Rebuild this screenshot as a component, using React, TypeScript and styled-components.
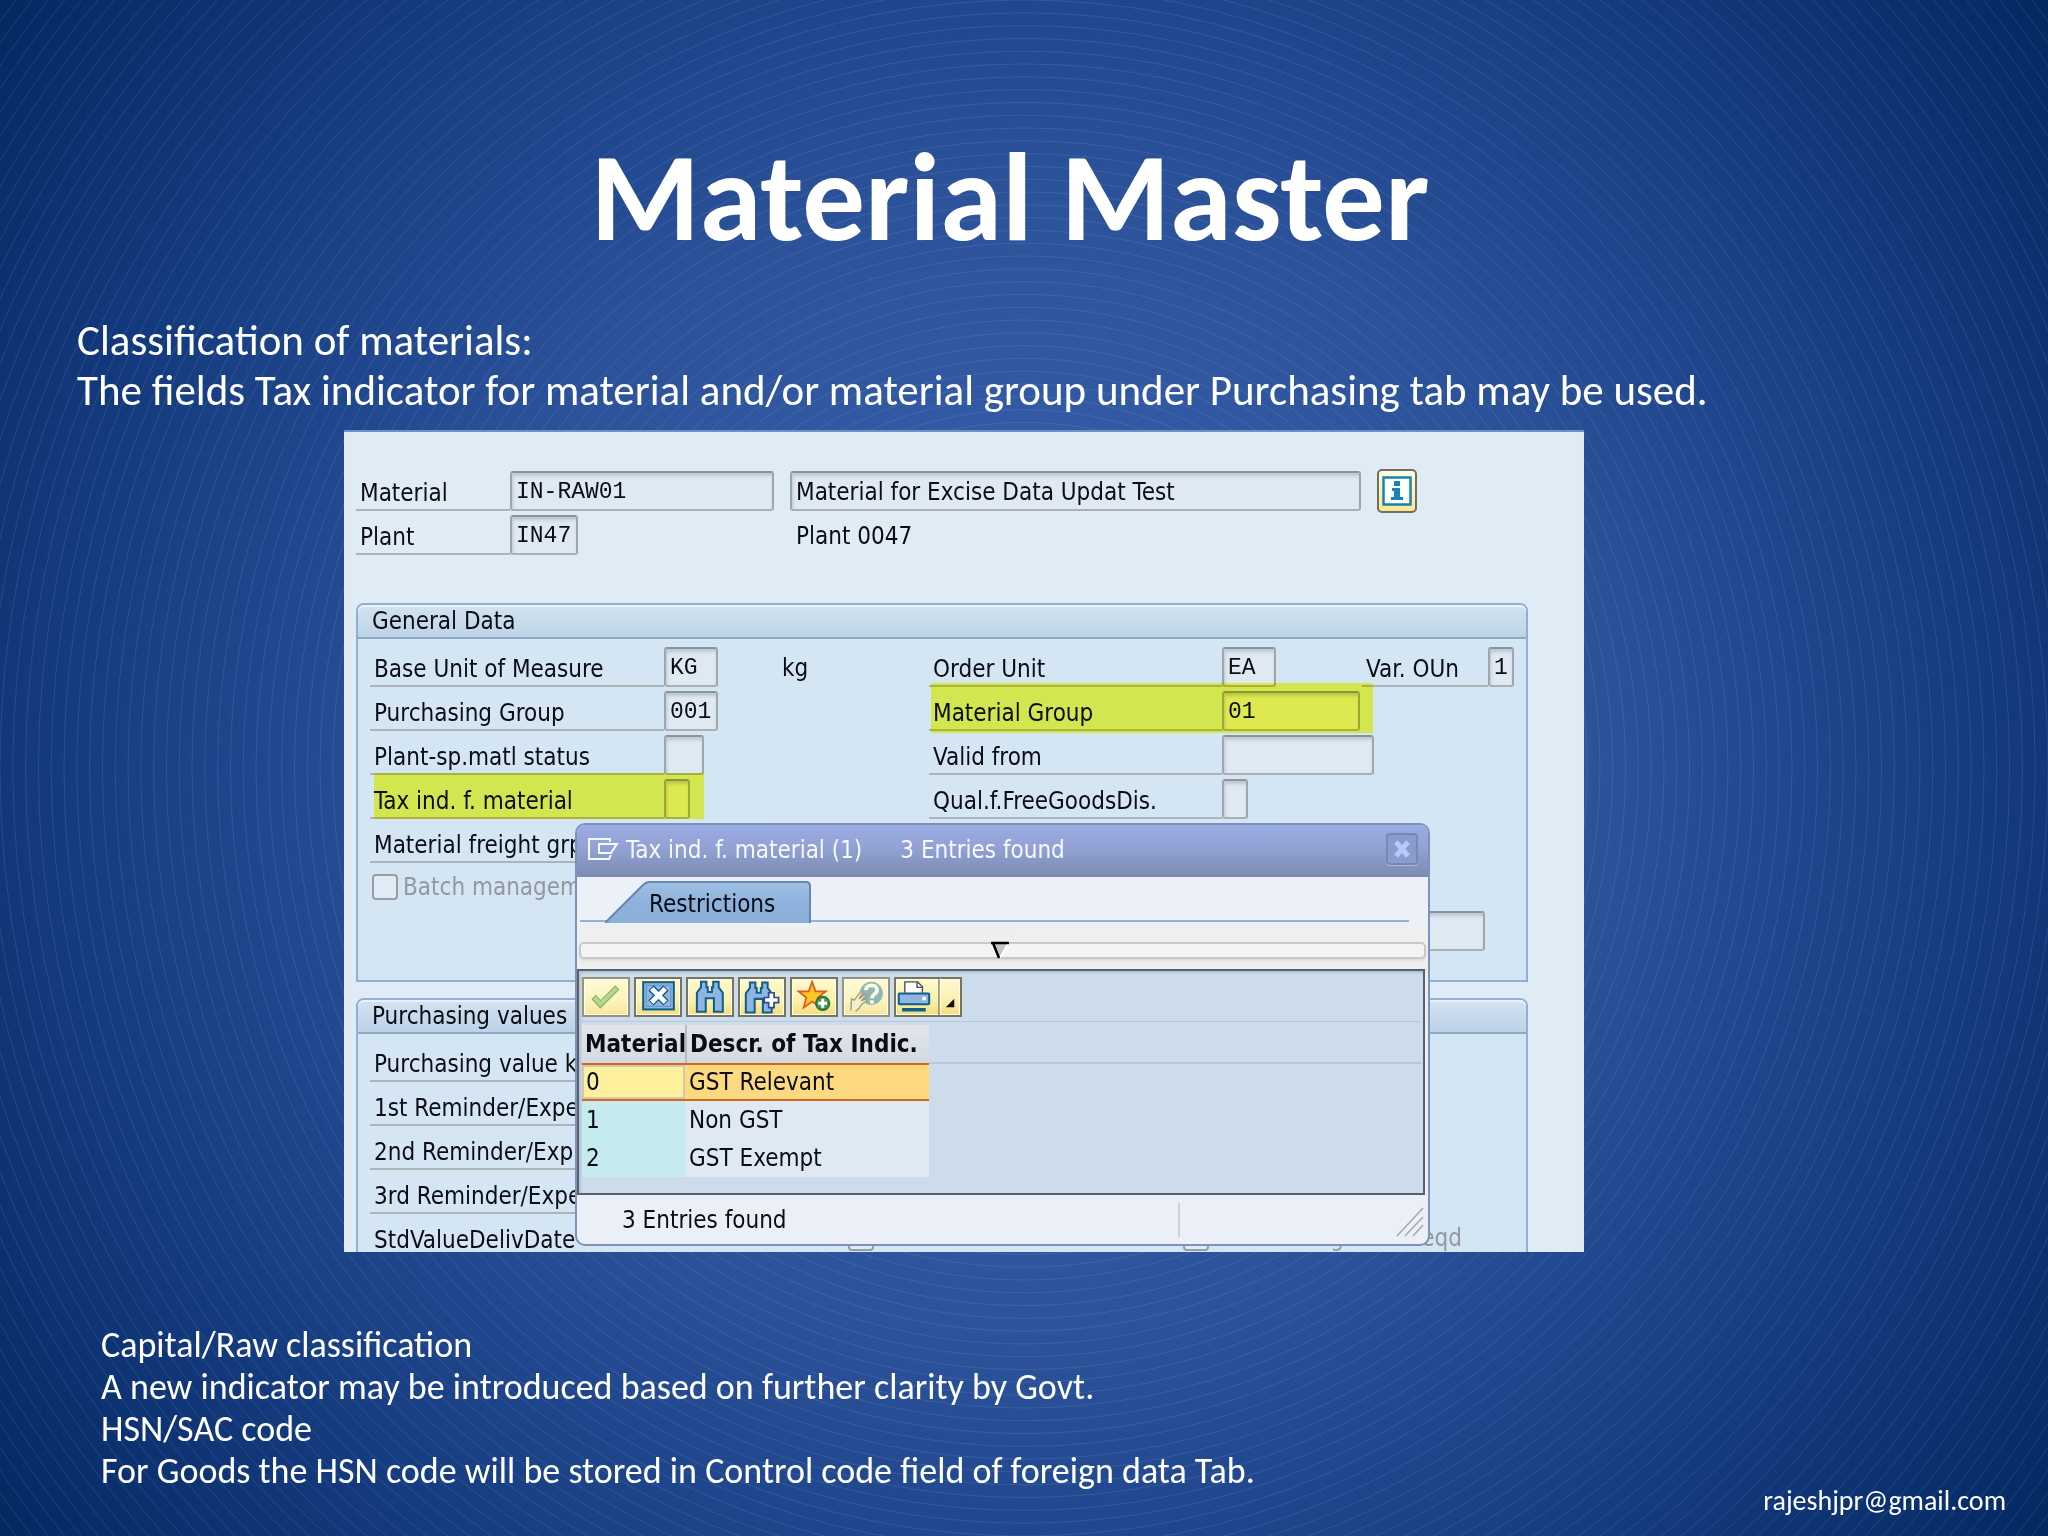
import React from 'react';
import styled, { createGlobalStyle, css } from 'styled-components';

const GlobalStyle = createGlobalStyle`
  *, *::before, *::after { box-sizing: border-box; }
  body { margin: 0; background: #0a2f6e; }
  button, input { font: inherit; color: inherit; margin: 0; }
`;

const slideFont = `Carlito, Lato, "Open Sans", sans-serif`;
const formFont = `"DejaVu Sans Condensed", "DejaVu Sans", "Noto Sans", sans-serif`;
const monoFont = `"Liberation Mono", "DejaVu Sans Mono", monospace`;

/* ---------- Slide ---------- */

const Slide = styled.main`
  position: relative;
  display: flex;
  flex-direction: column;
  min-height: 100vh;
  padding: 122px 0 18px;
  overflow: hidden;
  color: #fff;
  font-family: ${slideFont};
  background: radial-gradient(
    circle farthest-corner at 50% 50%,
    #3a60ae 0%,
    #335aa5 25%,
    #2c5299 45%,
    #20478d 60%,
    #12387b 79%,
    #032861 100%
  );
`;

const Backdrop = styled.svg`
  position: absolute;
  inset: 0;
  width: 100%;
  height: 100%;
`;

const Title = styled.h1`
  position: relative;
  margin: 0 28px 0 0;
  font-size: 125px;
  line-height: 152px;
  font-weight: 700;
  text-align: center;
`;

const Intro = styled.p`
  position: relative;
  margin: 42px 77px 14px;
  font-size: 43px;
  line-height: 50px;
`;

const Footer = styled.footer`
  position: relative;
  display: flex;
  justify-content: space-between;
  align-items: flex-end;
  margin-top: 72px;
  padding: 0 42px 0 101px;
`;

const Notes = styled.p`
  margin: 0 0 26px;
  font-size: 36px;
  line-height: 42px;
`;

const Mail = styled.a`
  font-size: 28px;
  line-height: 34px;
  color: inherit;
  text-decoration: none;
`;

const Screen = styled.section`
  position: relative;
  height: 822px;
  margin: 0 464px 0 344px;
  padding: 39px 56px 0 12px;
  overflow: hidden;
  border-top: 2px solid #6c90c8;
  background: #dfebf5;
  color: #0c0c14;
  font-family: ${formFont};
  font-size: 24px;
  line-height: 40px;
`;

/* ---------- Form parts ---------- */

const Stack = styled.div`
  display: flex;
  flex-direction: column;
  gap: 4px;
`;

const Line = styled.div<{ $skip?: number; $mark?: 'wide' | 'tight' }>`
  position: relative;
  display: flex;
  align-items: center;
  height: 40px;
  margin-top: ${p => (p.$skip ?? 0) * 44}px;
  ${p => p.$mark && css`
    &::after {
      content: '';
      position: absolute;
      mix-blend-mode: multiply;
      background: #fdff53;
      pointer-events: none;
      ${p.$mark === 'wide'
        ? 'left: 2px; width: 442px; top: -8px; bottom: -2px;'
        : 'left: 4px; width: 330px; top: -6px; bottom: 0;'}
    }
  `}
`;

const FieldLabel = styled.label<{ $w: number }>`
  flex: none;
  width: ${p => p.$w}px;
  height: 40px;
  padding: 2px 0 0 4px;
  white-space: nowrap;
  overflow: hidden;
  box-shadow: inset 0 -2px #acb4b8;
`;

const Field = styled.input<{ $w: number; $mono?: boolean }>`
  flex: none;
  width: ${p => p.$w}px;
  height: 40px;
  padding: 4px 0 2px 4px;
  border: 2px solid #9ea6ac;
  border-top-color: #8b949b;
  border-bottom-color: #a9b0b3;
  border-radius: 3px;
  outline: none;
  background: #dfe9f2;
  box-shadow: inset 1px 3px 3px rgba(90, 105, 120, 0.25);
  font-family: ${p => (p.$mono ? monoFont : formFont)};
  font-size: ${p => (p.$mono ? 23 : 24)}px;
`;

const Plain = styled.span<{ $gap: number }>`
  margin-left: ${p => p.$gap}px;
  padding-top: 2px;
  white-space: nowrap;
`;

const Wide = styled.div`
  display: flex;
  margin-left: 16px;
`;

const Right = styled.div`
  display: flex;
  margin-left: auto;
`;

const Tick = styled.label<{ $gap?: number }>`
  display: flex;
  align-items: center;
  gap: 5px;
  margin-left: ${p => p.$gap ?? 0}px;
  color: #92989e;
  white-space: nowrap;
`;

const TickBox = styled.input.attrs({ type: 'checkbox' })`
  appearance: none;
  flex: none;
  width: 26px;
  height: 26px;
  border: 2px solid #969ea5;
  border-radius: 4px;
  background: #dfebf5;
`;

const Group = styled.section<{ $first?: boolean }>`
  min-height: ${p => (p.$first ? 0 : 300)}px;
  margin-top: ${p => (p.$first ? 48 : 16)}px;
  border: 2px solid #8fb0d4;
  border-radius: 8px 8px 0 0;
  background: #d4e6f4;
`;

const GroupHead = styled.h2`
  height: 34px;
  margin: 0;
  padding-left: 14px;
  border-bottom: 2px solid #8fa8c4;
  border-radius: 6px 6px 0 0;
  background: linear-gradient(#d3e3ef, #bcd3e8);
  box-shadow: inset 0 2px #e9f2fa;
  font-size: 24px;
  line-height: 32px;
  font-weight: 400;
`;

const GroupBody = styled.div`
  display: grid;
  grid-template-columns: 559px 1fr;
  padding: 8px 12px 29px 12px;
`;

const InfoButton = styled.button`
  display: grid;
  place-items: center;
  flex: none;
  width: 40px;
  height: 44px;
  margin-left: 16px;
  padding: 0;
  border: 2px solid #6f6f66;
  border-radius: 5px;
  background: linear-gradient(#fffbe2, #fbe88e);
`;

/* ---------- Hit list dialog ---------- */

const Dialog = styled.div`
  position: absolute;
  top: 391px;
  left: 231px;
  right: 154px;
  display: flex;
  flex-direction: column;
  border: 2px solid #7d92b8;
  border-radius: 10px;
  overflow: hidden;
  background: linear-gradient(#ecf0f8 0 60px, #ebf1f7 90px, #eeefee 115px, #efefef 148px, #ebf0f8 200px);
`;

const TitleBar = styled.header`
  display: flex;
  align-items: center;
  height: 52px;
  padding: 0 10px 4px 10px;
  color: #f6f9ff;
  background: linear-gradient(#9aabe2, #93a3d6 40%, #7b8bb2);
  white-space: pre;
`;

const TitleText = styled.span<{ $gap: number }>`
  margin-left: ${p => p.$gap}px;
  padding-top: 2px;
`;

const CloseButton = styled.button`
  display: grid;
  place-items: center;
  width: 32px;
  height: 32px;
  margin-left: auto;
  padding: 0;
  border: 2px solid #7788b4;
  border-radius: 4px;
  background: #8b9bcb;
  box-shadow: 0 1px #a9b8e4;
`;

const TabStrip = styled.div`
  display: flex;
  height: 46px;
  margin: 0 19px 19px 3px;
  padding: 4px 0 0 25px;
  background: linear-gradient(#8fb1da, #8fb1da) 0 43px / 100% 2px no-repeat;
`;

const Tab = styled.button`
  position: relative;
  width: 206px;
  height: 42px;
  padding: 2px 0 0 44px;
  border: 0;
  background: none;
  line-height: 42px;
  text-align: left;

  svg {
    position: absolute;
    inset: 0;
  }
  span { position: relative; }
`;

const Splitter = styled.div`
  display: flex;
  justify-content: center;
  height: 17px;
  margin: 0 2px 10px;
  padding-right: 6px;
  border: 2px solid #c9c9c9;
  border-radius: 5px;
  background: #f4f4f4;
  box-shadow: 0 2px 2px #dcdcdc;

  svg { flex: none; margin-top: -3px; }
`;

const Results = styled.div`
  margin-right: 3px;
  padding: 6px 2px 16px 0;
  border: 2px solid #5b6168;
  background: #ccdceb;
  box-shadow: inset 2px 2px 2px #b4c3d2;
`;

const Toolbar = styled.div`
  display: flex;
  gap: 4px;
  padding: 0 0 4px 3px;
  border-bottom: 1px solid #b9c8d8;
`;

const ToolButton = styled.button<{ $w?: number }>`
  width: ${p => p.$w ?? 48}px;
  height: 40px;
  padding: 0;
  border: 2px solid #77745f;
  box-shadow: inset 0 0 0 1px #fffdf0;
  background: linear-gradient(#fff9cf, #fbf0ad 60%, #f4dd7d);

  &:disabled {
    border-color: #95957f;
    background: linear-gradient(#fffad6, #fbf3bd 60%, #f6e69c);
  }
  svg { display: block; margin: -2px; }
`;

const TableWrap = styled.div`
  padding: 3px 0 0 3px;
  background: linear-gradient(#b9c8d8, #b9c8d8) 0 40px / 100% 2px no-repeat;
`;

const Table = styled.table`
  width: 347px;
  border-collapse: separate;
  border-spacing: 0;
  table-layout: fixed;
  line-height: 38px;
  text-align: left;
`;

const Th = styled.th<{ $w: number }>`
  width: ${p => p.$w}px;
  height: 38px;
  padding: 0 0 0 3px;
  font-weight: 700;
  white-space: nowrap;
  background: linear-gradient(#e3e6e9, #d2dae3);

  & + & { border-left: 2px solid #b3bac2; }
`;

const Tr = styled.tr<{ $active?: boolean }>`
  td {
    height: 38px;
    padding: 0 0 0 4px;
    background: #dfe9f4;
  }
  td:first-child { background: #c6ebee; }

  ${p => p.$active && css`
    td, td:first-child {
      border-top: 2px solid #d2691e;
      border-bottom: 2px solid #d2691e;
      line-height: 34px;
      background: #fdda80;
    }
    td:first-child {
      background: #fff09d;
      box-shadow: inset 0 0 0 2px #cfc9b0;
    }
  `}
`;

const StatusBar = styled.div`
  display: flex;
  align-items: center;
  justify-content: space-between;
  height: 49px;
  padding: 0 4px 0 45px;
`;

const StatusEnd = styled.div`
  display: flex;
  align-items: flex-end;
  justify-content: flex-end;
  width: 246px;
  height: 34px;
  border-left: 2px solid #cdd2d8;
`;

/* ---------- Drawings ---------- */

const RING_STEP = 12.8;

const Rings = () => (
  <Backdrop viewBox="0 0 2048 1536" preserveAspectRatio="xMidYMid slice" aria-hidden="true">
    <g fill="none" stroke="#86a6dc" strokeOpacity="0.19">
      {Array.from({ length: 100 }, (_, i) => (
        <circle key={i} cx="1024" cy="768" r={(i + 1) * RING_STEP} />
      ))}
    </g>
  </Backdrop>
);

const InfoIcon = () => (
  <svg width="30" height="30" viewBox="0 0 30 30" aria-hidden="true">
    <rect x="1.5" y="1.5" width="27" height="27" fill="#fff" stroke="#1583b4" strokeWidth="2.5" />
    <path d="M12 5h6v5h-6zM10 12h8v9h3v3H9v-3h3v-6h-2z" fill="#1583b4" />
  </svg>
);

const WindowIcon = () => (
  <svg width="32" height="24" viewBox="0 0 32 24" fill="none" stroke="#f6f9ff" strokeWidth="2" aria-hidden="true">
    <path d="M23 5V2H2v20h20l2-4M12 7h18l-6 9H12z" />
  </svg>
);

const CrossIcon = () => (
  <svg width="20" height="20" viewBox="0 0 20 20" aria-hidden="true">
    <path d="M4 3l12 14M16 3L4 17" stroke="#b4caf8" strokeWidth="5" />
  </svg>
);

const TabShape = () => (
  <svg width="206" height="42" viewBox="0 0 206 42" aria-hidden="true">
    <defs>
      <linearGradient id="tabFill" x1="0" y1="0" x2="0" y2="1">
        <stop offset="0" stopColor="#a0c0e4" />
        <stop offset="0.5" stopColor="#8db2dc" />
        <stop offset="1" stopColor="#8ab0da" />
      </linearGradient>
    </defs>
    <path d="M0 42 38 4Q41 1 44 1H201Q205 1 205 5V42Z" fill="url(#tabFill)" />
    <path d="M0 42 38 4Q41 1 44 1H201Q205 1 205 5V42" fill="none" stroke="#6486b4" strokeWidth="2" />
  </svg>
);

const Pointer = () => (
  <svg width="18" height="18" viewBox="0 0 18 18" aria-hidden="true">
    <path d="M1 1h16L8 17z" fill="#c4c4c4" />
    <path d="M17 3 9 17" stroke="#fff" strokeWidth="2" />
    <path d="M0 2h18M2 2l6 15" stroke="#000" strokeWidth="2.5" fill="none" />
  </svg>
);

const Grip = () => (
  <svg width="28" height="30" viewBox="0 0 28 30" stroke="#a6abb2" strokeWidth="1.6" aria-hidden="true">
    <path d="M1 29 27 1M9 29 27 10M17 29 27 18" />
  </svg>
);

const Art = ({ w = 141, children }: { w?: number; children: React.ReactNode }) => (
  <svg width={(w / 141) * 47 + 1} height="40" viewBox={`0 0 ${w} 117`} aria-hidden="true">{children}</svg>
);

const Binoculars = () => (
  <path
    d="M44 14H60V30H64V44H76V30H80V14H96V30L108 46V102H82V62H58V102H32V46L44 30Z"
    fill="#8fb5e2" stroke="#0f5f8a" strokeWidth="6"
  />
);

const CheckIcon = () => (
  <Art><path d="M34 58 54 80 104 30" fill="none" stroke="#8fb46e" strokeWidth="18" /><path d="M36 60 54 79 102 32" fill="none" stroke="#b2d98a" strokeWidth="11" /></Art>
);
const CancelIcon = () => (
  <Art>
    <rect x="27" y="15" width="90" height="80" fill="#8fb5e2" stroke="#0f5f8a" strokeWidth="6" />
    <rect x="36" y="24" width="72" height="62" fill="none" stroke="#5d93c0" strokeWidth="3" />
    <path d="M50 32 94 76M94 32 50 76" stroke="#0f5f8a" strokeWidth="22" />
    <path d="M52 34 92 74M92 34 52 74" stroke="#fff" strokeWidth="14" />
  </Art>
);
const FindIcon = () => <Art><Binoculars /></Art>;
const FindNextIcon = () => (
  <Art>
    <g transform="translate(-9 2)"><Binoculars /></g>
    <path d="M90 46H106V60H119V75H106V90H90V75H77V60H90Z" fill="#fff" stroke="#2848a0" strokeWidth="5" />
  </Art>
);
const StarIcon = () => (
  <Art>
    <path d="M65 14 75 42H105L82 60 90 88 65 72 40 90 48 60 25 42H55Z" fill="#ffc62a" stroke="#e2561c" strokeWidth="5" />
    <circle cx="96" cy="77" r="20" fill="#4c9a58" stroke="#2d6b3c" strokeWidth="5" />
    <path d="M96 64V90M83 77H109" stroke="#fff" strokeWidth="9" />
  </Art>
);
const HelpIcon = () => (
  <Art>
    <circle cx="86" cy="48" r="34" fill="#8db8b8" />
    <path d="M70 38Q71 24 87 24 103 25 103 38 103 46 94 51 88 55 88 62M88 68V78" fill="none" stroke="#fdfbe6" strokeWidth="11" />
    <path d="M26 98 28 64 36 68 56 42 61 46 50 64 68 50 71 55 56 70 70 64 72 70 58 80 50 92 40 100" fill="#f7eecb" stroke="#a29c84" strokeWidth="4" />
  </Art>
);
const PrintIcon = () => (
  <Art w={201}>
    <path d="M32 46V14H70L84 28V46" fill="#fff" stroke="#4b4b4b" strokeWidth="4" />
    <path d="M68 14V30H84" fill="none" stroke="#4b4b4b" strokeWidth="4" />
    <rect x="14" y="48" width="90" height="32" rx="3" fill="#8fb5e2" stroke="#0f5f8a" strokeWidth="6" />
    <rect x="84" y="58" width="10" height="10" fill="#fff" />
    <path d="M24 96H94" stroke="#0f5f8a" strokeWidth="10" />
    <path d="M133 4V112" stroke="#77745f" strokeWidth="4" />
    <path d="M137 4V112" stroke="#fffdf0" strokeWidth="3" />
    <path d="M178 64V89H153Z" fill="#111" />
  </Art>
);

/* ---------- Composition ---------- */

type LabelledProps = {
  id: string; label: string; lw: number; fw: number; value?: string; mono?: boolean;
};

const Labelled = ({ id, label, lw, fw, value = '', mono }: LabelledProps) => (
  <>
    <FieldLabel htmlFor={id} $w={lw}>{label}</FieldLabel>
    <Field id={id} $w={fw} $mono={mono} defaultValue={value} />
  </>
);

const tools = [
  { name: 'Copy', icon: <CheckIcon />, off: true },
  { name: 'Close', icon: <CancelIcon /> },
  { name: 'Find', icon: <FindIcon /> },
  { name: 'Find next', icon: <FindNextIcon /> },
  { name: 'Insert in personal list', icon: <StarIcon /> },
  { name: 'Help', icon: <HelpIcon />, off: true },
  { name: 'Print', icon: <PrintIcon />, w: 68 },
];

const entries = [['0', 'GST Relevant'], ['1', 'Non GST'], ['2', 'GST Exempt']];

const reminders = [
  'Purchasing value k', '1st Reminder/Expe', '2nd Reminder/Exp', '3rd Reminder/Expe',
];

const HitList = () => (
  <Dialog role="dialog" aria-label="Tax ind. f. material">
    <TitleBar>
      <WindowIcon />
      <TitleText $gap={7}>Tax ind. f. material (1)</TitleText>
      <TitleText $gap={38}>3 Entries found</TitleText>
      <CloseButton aria-label="Close"><CrossIcon /></CloseButton>
    </TitleBar>
    <TabStrip>
      <Tab><TabShape /><span>Restrictions</span></Tab>
    </TabStrip>
    <Splitter><Pointer /></Splitter>
    <Results>
      <Toolbar>
        {tools.map(t => (
          <ToolButton key={t.name} aria-label={t.name} disabled={t.off} $w={t.w}>{t.icon}</ToolButton>
        ))}
      </Toolbar>
      <TableWrap>
        <Table>
          <thead><tr><Th $w={103}>Material</Th><Th $w={244}>Descr. of Tax Indic.</Th></tr></thead>
          <tbody>
            {entries.map(([k, d], i) => (
              <Tr key={k} $active={i === 0}><td>{k}</td><td>{d}</td></Tr>
            ))}
          </tbody>
        </Table>
      </TableWrap>
    </Results>
    <StatusBar>
      <span>3 Entries found</span>
      <StatusEnd><Grip /></StatusEnd>
    </StatusBar>
  </Dialog>
);

export default function App() {
  return (
    <Slide>
      <GlobalStyle />
      <Rings />
      <Title>Material Master</Title>
      <Intro>
        Classification of materials:<br />
        The fields Tax indicator for material and/or material group under Purchasing tab may be used.
      </Intro>

      <Screen>
        <Stack>
          <Line>
            <Labelled id="material" label="Material" lw={154} fw={264} value="IN-RAW01" mono />
            <Wide><Field $w={571} aria-label="Description" defaultValue="Material for Excise Data Updat Test" /></Wide>
            <InfoButton aria-label="Information"><InfoIcon /></InfoButton>
          </Line>
          <Line>
            <Labelled id="plant" label="Plant" lw={154} fw={68} value="IN47" mono />
            <Plain $gap={218}>Plant 0047</Plain>
          </Line>
        </Stack>

        <Group $first>
          <GroupHead>General Data</GroupHead>
          <GroupBody>
            <Stack>
              <Line><Labelled id="uom" label="Base Unit of Measure" lw={294} fw={54} value="KG" mono /><Plain $gap={64}>kg</Plain></Line>
              <Line><Labelled id="pgroup" label="Purchasing Group" lw={294} fw={54} value="001" mono /></Line>
              <Line><Labelled id="status" label="Plant-sp.matl status" lw={294} fw={40} /></Line>
              <Line $mark="tight"><Labelled id="tax" label="Tax ind. f. material" lw={294} fw={26} /></Line>
              <Line><Labelled id="freight" label="Material freight grp" lw={294} fw={120} /></Line>
              <Line><Tick $gap={2}><TickBox disabled />Batch managem</Tick></Line>
            </Stack>
            <Stack>
              <Line>
                <Labelled id="ounit" label="Order Unit" lw={293} fw={54} value="EA" mono />
                <Right><Labelled id="var" label="Var. OUn" lw={126} fw={26} value="1" mono /></Right>
              </Line>
              <Line $mark="wide"><Labelled id="mgroup" label="Material Group" lw={293} fw={138} value="01" mono /></Line>
              <Line><Labelled id="valid" label="Valid from" lw={293} fw={152} /></Line>
              <Line><Labelled id="qual" label="Qual.f.FreeGoodsDis." lw={293} fw={26} /></Line>
              <Line $skip={2}><Plain $gap={293} /><Field $w={263} aria-label="Batch entry" /></Line>
            </Stack>
          </GroupBody>
        </Group>

        <Group>
          <GroupHead>Purchasing values</GroupHead>
          <GroupBody>
            <Stack>
              {reminders.map((r, i) => (
                <Line key={r}><Labelled id={`rem${i}`} label={r} lw={294} fw={80} /></Line>
              ))}
              <Line>
                <FieldLabel as="span" $w={478}>StdValueDelivDate</FieldLabel>
                <Tick><TickBox disabled aria-label="Shipping" /></Tick>
              </Line>
            </Stack>
            <Stack>
              <Line $skip={4}><Tick $gap={254}><TickBox disabled />Acknowledgment Reqd</Tick></Line>
            </Stack>
          </GroupBody>
        </Group>

        <HitList />
      </Screen>

      <Footer>
        <Notes>
          Capital/Raw classification<br />
          A new indicator may be introduced based on further clarity by Govt.<br />
          HSN/SAC code<br />
          For Goods the HSN code will be stored in Control code field of foreign data Tab.
        </Notes>
        <Mail href="mailto:rajeshjpr@gmail.com">rajeshjpr@gmail.com</Mail>
      </Footer>
    </Slide>
  );
}
